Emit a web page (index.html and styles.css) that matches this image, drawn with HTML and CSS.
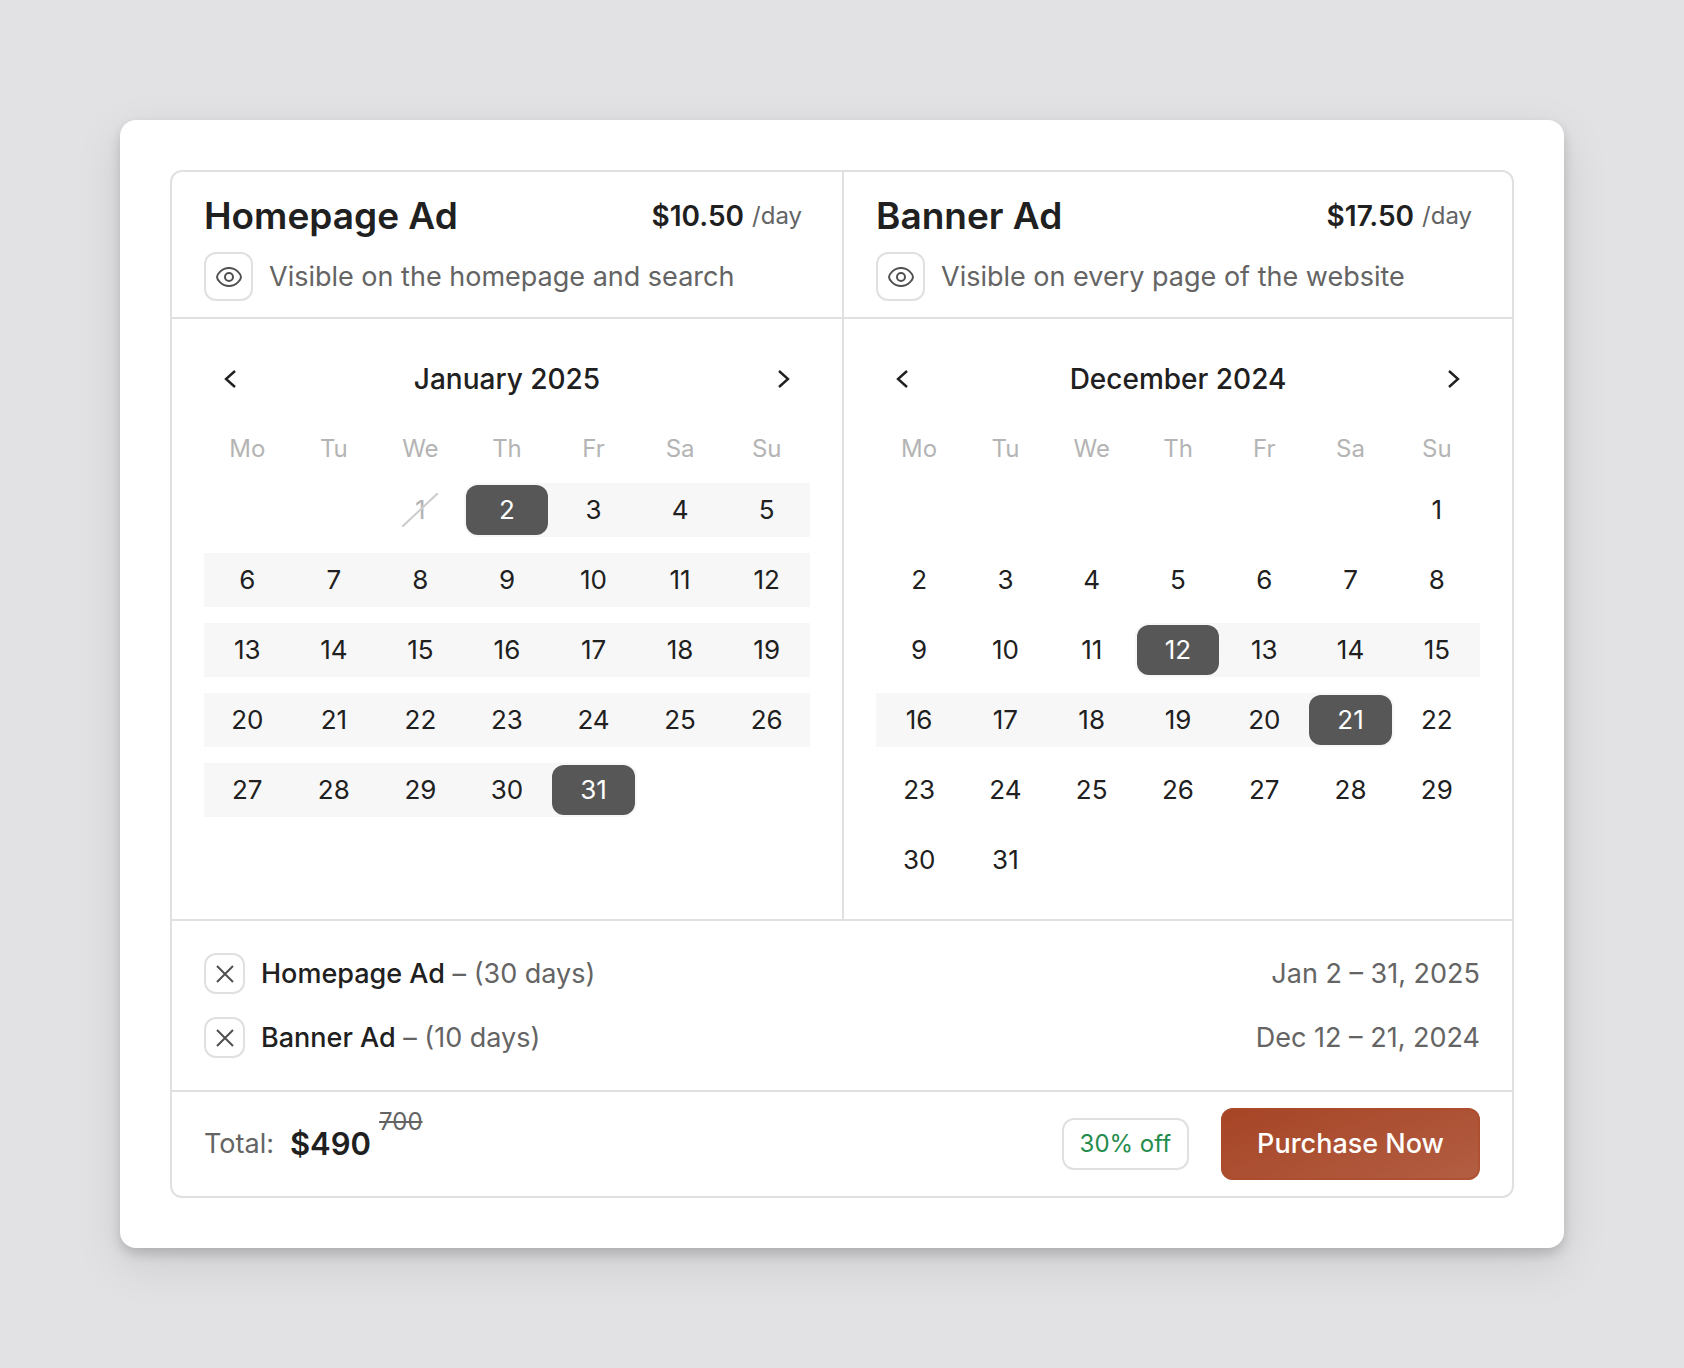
FILE: index.html
```html
<!DOCTYPE html>
<html lang="en">
<head>
<meta charset="utf-8">
<meta name="viewport" content="width=device-width, initial-scale=1">
<title>Book an ad</title>
<link rel="stylesheet" href="styles.css">
</head>
<body>
<svg class="sprite" aria-hidden="true">
  <symbol id="icon-eye" viewBox="0 0 26 20"><path d="M1 10C1 7.600 5.400 1 13 1s12 6.600 12 9-4.400 9-12 9S1 12.400 1 10Z"/><circle cx="13" cy="10" r="4"/></symbol>
  <symbol id="icon-prev" viewBox="0 0 12 18"><path d="M11 1 2 9l9 8"/></symbol>
  <symbol id="icon-next" viewBox="0 0 12 18"><path d="m1 1 9 8-9 8"/></symbol>
  <symbol id="icon-close" viewBox="0 0 18 18"><path d="m1 1 16 16M17 1 1 17"/></symbol>
</svg>
<main class="card">
  <div class="booking">
    <div class="products">
      <section class="product">
        <header class="product-head">
          <div class="title-row">
            <h2 class="title">Homepage Ad</h2>
            <p class="price"><strong class="amount">$10.50</strong><span class="unit">/day</span></p>
          </div>
          <div class="note">
            <span class="icon-box"><svg class="icon eye" width="26" height="20"><use href="#icon-eye"/></svg></span>
            <p class="text">Visible on the homepage and search</p>
          </div>
        </header>
        <div class="calendar">
          <div class="month-nav">
            <button class="nav-button" type="button" aria-label="Previous month"><svg class="icon" width="12" height="18"><use href="#icon-prev"/></svg></button>
            <h3 class="month">January 2025</h3>
            <button class="nav-button" type="button" aria-label="Next month"><svg class="icon" width="12" height="18"><use href="#icon-next"/></svg></button>
          </div>
          <table class="days">
            <thead><tr><th>Mo</th><th>Tu</th><th>We</th><th>Th</th><th>Fr</th><th>Sa</th><th>Su</th></tr></thead>
            <tbody>
              <tr><td></td><td></td><td><button class="day" type="button" disabled>1<svg class="slash" width="36" height="34" viewBox="0 0 36 34" aria-hidden="true"><path d="M0 34 36 0"/></svg></button></td><td class="range start"><button class="day" type="button">2</button></td><td class="range"><button class="day" type="button">3</button></td><td class="range"><button class="day" type="button">4</button></td><td class="range"><button class="day" type="button">5</button></td></tr>
              <tr><td class="range"><button class="day" type="button">6</button></td><td class="range"><button class="day" type="button">7</button></td><td class="range"><button class="day" type="button">8</button></td><td class="range"><button class="day" type="button">9</button></td><td class="range"><button class="day" type="button">10</button></td><td class="range"><button class="day" type="button">11</button></td><td class="range"><button class="day" type="button">12</button></td></tr>
              <tr><td class="range"><button class="day" type="button">13</button></td><td class="range"><button class="day" type="button">14</button></td><td class="range"><button class="day" type="button">15</button></td><td class="range"><button class="day" type="button">16</button></td><td class="range"><button class="day" type="button">17</button></td><td class="range"><button class="day" type="button">18</button></td><td class="range"><button class="day" type="button">19</button></td></tr>
              <tr><td class="range"><button class="day" type="button">20</button></td><td class="range"><button class="day" type="button">21</button></td><td class="range"><button class="day" type="button">22</button></td><td class="range"><button class="day" type="button">23</button></td><td class="range"><button class="day" type="button">24</button></td><td class="range"><button class="day" type="button">25</button></td><td class="range"><button class="day" type="button">26</button></td></tr>
              <tr><td class="range"><button class="day" type="button">27</button></td><td class="range"><button class="day" type="button">28</button></td><td class="range"><button class="day" type="button">29</button></td><td class="range"><button class="day" type="button">30</button></td><td class="range end"><button class="day" type="button">31</button></td><td></td><td></td></tr>
            </tbody>
          </table>
        </div>
      </section>
      <section class="product">
        <header class="product-head">
          <div class="title-row">
            <h2 class="title">Banner Ad</h2>
            <p class="price"><strong class="amount">$17.50</strong><span class="unit">/day</span></p>
          </div>
          <div class="note">
            <span class="icon-box"><svg class="icon eye" width="26" height="20"><use href="#icon-eye"/></svg></span>
            <p class="text">Visible on every page of the website</p>
          </div>
        </header>
        <div class="calendar">
          <div class="month-nav">
            <button class="nav-button" type="button" aria-label="Previous month"><svg class="icon" width="12" height="18"><use href="#icon-prev"/></svg></button>
            <h3 class="month">December 2024</h3>
            <button class="nav-button" type="button" aria-label="Next month"><svg class="icon" width="12" height="18"><use href="#icon-next"/></svg></button>
          </div>
          <table class="days">
            <thead><tr><th>Mo</th><th>Tu</th><th>We</th><th>Th</th><th>Fr</th><th>Sa</th><th>Su</th></tr></thead>
            <tbody>
              <tr><td></td><td></td><td></td><td></td><td></td><td></td><td><button class="day" type="button">1</button></td></tr>
              <tr><td><button class="day" type="button">2</button></td><td><button class="day" type="button">3</button></td><td><button class="day" type="button">4</button></td><td><button class="day" type="button">5</button></td><td><button class="day" type="button">6</button></td><td><button class="day" type="button">7</button></td><td><button class="day" type="button">8</button></td></tr>
              <tr><td><button class="day" type="button">9</button></td><td><button class="day" type="button">10</button></td><td><button class="day" type="button">11</button></td><td class="range start"><button class="day" type="button">12</button></td><td class="range"><button class="day" type="button">13</button></td><td class="range"><button class="day" type="button">14</button></td><td class="range"><button class="day" type="button">15</button></td></tr>
              <tr><td class="range"><button class="day" type="button">16</button></td><td class="range"><button class="day" type="button">17</button></td><td class="range"><button class="day" type="button">18</button></td><td class="range"><button class="day" type="button">19</button></td><td class="range"><button class="day" type="button">20</button></td><td class="range end"><button class="day" type="button">21</button></td><td><button class="day" type="button">22</button></td></tr>
              <tr><td><button class="day" type="button">23</button></td><td><button class="day" type="button">24</button></td><td><button class="day" type="button">25</button></td><td><button class="day" type="button">26</button></td><td><button class="day" type="button">27</button></td><td><button class="day" type="button">28</button></td><td><button class="day" type="button">29</button></td></tr>
              <tr><td><button class="day" type="button">30</button></td><td><button class="day" type="button">31</button></td><td></td><td></td><td></td><td></td><td></td></tr>
            </tbody>
          </table>
        </div>
      </section>
    </div>
    <ul class="cart">
      <li class="cart-row">
        <button class="remove" type="button" aria-label="Remove Homepage Ad"><svg class="icon" width="18" height="18"><use href="#icon-close"/></svg></button>
        <p class="text"><strong class="name">Homepage Ad</strong> – (30 days)</p>
        <p class="text dates">Jan 2 – 31, 2025</p>
      </li>
      <li class="cart-row">
        <button class="remove" type="button" aria-label="Remove Banner Ad"><svg class="icon" width="18" height="18"><use href="#icon-close"/></svg></button>
        <p class="text"><strong class="name">Banner Ad</strong> – (10 days)</p>
        <p class="text dates">Dec 12 – 21, 2024</p>
      </li>
    </ul>
    <footer class="checkout">
      <p class="text">Total:</p>
      <p class="total"><strong class="sum">$490</strong><del class="old-sum">700</del></p>
      <span class="badge">30% off</span>
      <button class="purchase" type="button">Purchase Now</button>
    </footer>
  </div>
</main>
</body>
</html>
```
FILE: styles.css
```css
* {
  box-sizing: border-box;
}

:root {
  --ink: #202020;
  --muted: #646464;
  --faint: #b4b4b4;
  --line: #e0e0e0;
  --range: #f7f7f7;
}

body {
  margin: 0;
  padding: 120px;
  background: #e2e2e4;
  color: var(--ink);
  font: 400 27px/32px Inter, "Liberation Sans", sans-serif;
}

h2, h3, p, ul {
  margin: 0;
  padding: 0;
  font-weight: inherit;
}

button {
  padding: 0;
  border: 0;
  background: none;
  color: inherit;
  font: inherit;
  cursor: pointer;
}

.sprite {
  display: none;
}

.icon {
  display: block;
  fill: none;
  stroke: currentColor;
  stroke-width: 2;
  stroke-linecap: butt;
}

.card {
  padding: 50px;
  border-radius: 16px;
  background: #fff;
  box-shadow: 0 6px 12px rgba(0, 0, 0, .16), 0 16px 48px rgba(0, 0, 0, .1);
}

.booking {
  border: 2px solid var(--line);
  border-radius: 12px;
}

.products {
  display: grid;
  grid-template-columns: calc(50% + 2px) 1fr;
}

.product {
  border-right: 2px solid var(--line);
}

.product:last-child {
  border-right: 0;
}

.product-head {
  display: flex;
  flex-direction: column;
  gap: 16px;
  padding: 24px 32px 16px;
  border-bottom: 2px solid var(--line);
}

.title-row {
  display: flex;
  align-items: center;
  justify-content: space-between;
  height: 40px;
}

.title {
  font-size: 37px;
  font-weight: 600;
  line-height: 40px;
}

.price {
  display: flex;
  align-items: center;
  gap: 8px;
  padding-right: 8px;
}

.amount {
  font-size: 28px;
  font-weight: 600;
}

.unit {
  color: var(--muted);
  font-size: 24px;
}

.note {
  display: flex;
  align-items: center;
  gap: 16px;
}

.icon-box,
.remove {
  display: flex;
  align-items: center;
  justify-content: center;
  flex: none;
  border: 2px solid var(--line);
  border-radius: 12px;
  color: #505050;
}

.icon-box {
  width: 49px;
  height: 49px;
}

.text {
  color: var(--muted);
}

.calendar {
  padding: 32px 32px 16px;
}

.month-nav {
  display: flex;
  align-items: center;
  justify-content: space-between;
  height: 56px;
}

.nav-button {
  display: flex;
  align-items: center;
  justify-content: center;
  width: 52px;
  height: 52px;
}

.nav-button .icon {
  stroke-width: 2.4;
}

.month {
  font-size: 28px;
  font-weight: 500;
}

.days {
  width: 100%;
  margin-top: 8px;
  table-layout: fixed;
  border-collapse: separate;
  border-spacing: 0 16px;
}

.days th {
  height: 36px;
  padding: 0;
  color: var(--faint);
  font-size: 24px;
  font-weight: 400;
}

.days td {
  height: 54px;
  padding: 0;
}

.day {
  display: block;
  position: relative;
  width: 100%;
  height: 54px;
  font-size: 26px;
}

.day:disabled {
  color: var(--faint);
}

.slash {
  position: absolute;
  inset: 0;
  margin: auto;
  fill: none;
  stroke: #ccc;
  stroke-width: 2;
}

.range {
  background: var(--range);
}

.days .start,
.days .end {
  padding: 2px;
}

.start {
  border-radius: 14px 0 0 14px;
}

.end {
  border-radius: 0 14px 14px 0;
}

.start .day,
.end .day {
  height: 50px;
  border-radius: 12px;
  background: #575757;
  color: #fff;
}

.cart {
  display: grid;
  gap: 23px;
  padding: 32px;
  border-top: 2px solid var(--line);
  list-style: none;
}

.cart-row {
  display: flex;
  align-items: center;
  gap: 16px;
}

.remove {
  width: 41px;
  height: 41px;
}

.name {
  color: var(--ink);
  font-weight: 500;
}

.dates {
  margin-left: auto;
}

.checkout {
  display: flex;
  align-items: center;
  gap: 16px;
  padding: 16px 32px;
  border-top: 2px solid var(--line);
}

.total {
  display: flex;
  align-items: center;
  gap: 8px;
}

.sum {
  font-size: 31px;
  font-weight: 600;
}

.old-sum {
  padding-bottom: 44px;
  color: var(--muted);
  font-size: 24px;
  line-height: 28px;
}

.badge {
  margin-left: auto;
  padding: 8px 16px;
  border: 2px solid var(--line);
  border-radius: 12px;
  color: #248c4c;
  font-size: 24px;
}

.purchase {
  height: 72px;
  margin-left: 16px;
  padding: 0 36px;
  border-radius: 12px;
  background: linear-gradient(160deg, #a64425, #b35e43);
  box-shadow: inset 0 0 0 2px rgba(170, 75, 42, .6);
  color: #fff;
  font-weight: 500;
}
```
